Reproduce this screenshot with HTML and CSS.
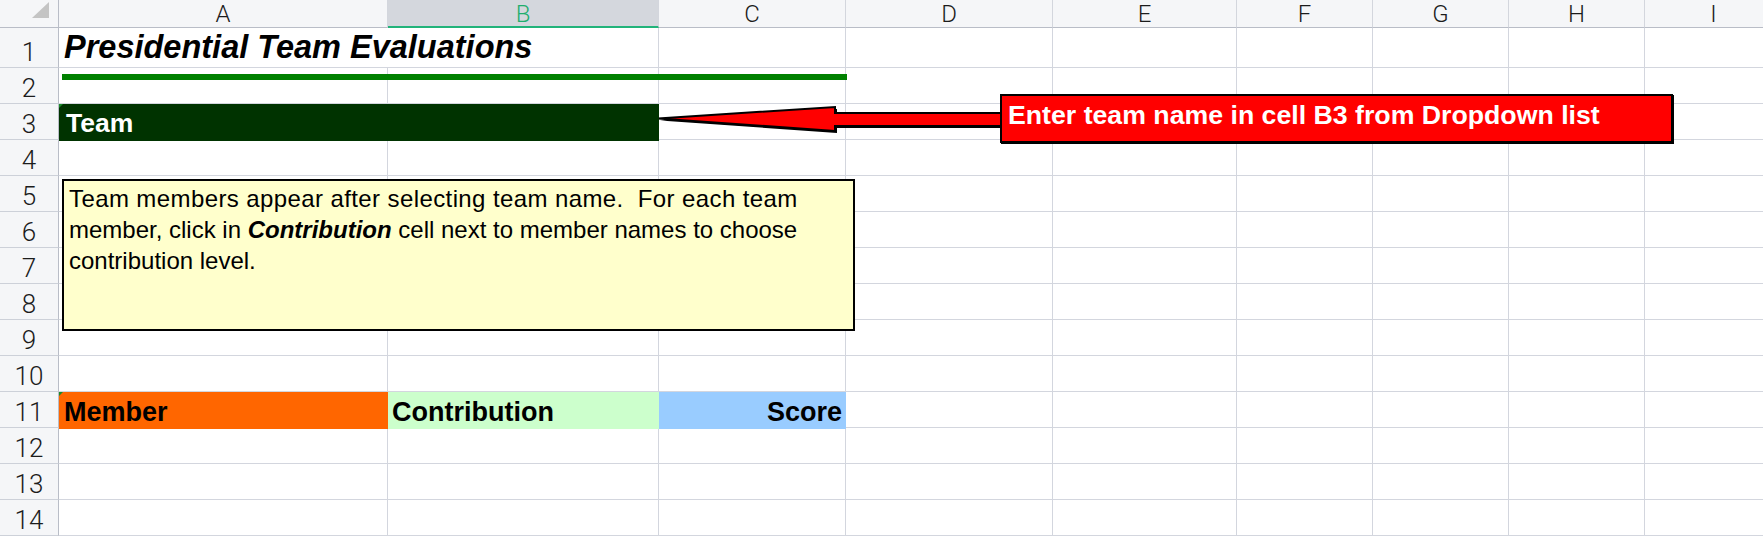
FILE: index.html
```html
<!DOCTYPE html>
<html>
<head>
<meta charset="utf-8">
<link rel="stylesheet" href="styles.css">
</head>
<body>
<div class="page">
  <div class="sheet">
    <div class="corner"><svg class="corner-tri" width="20" height="18" viewBox="0 0 20 18"><polygon points="18,1 18,17 1,17" fill="#c4c4c4"/></svg></div>
    <div class="colhead">A</div>
    <div class="colhead sel">B</div>
    <div class="colhead">C</div>
    <div class="colhead">D</div>
    <div class="colhead">E</div>
    <div class="colhead">F</div>
    <div class="colhead">G</div>
    <div class="colhead">H</div>
    <div class="colhead">I</div>

    <div class="rowhead">1</div>
    <div class="c span2 title">Presidential Team Evaluations</div>
    <div class="c"></div><div class="c"></div><div class="c"></div><div class="c"></div><div class="c"></div><div class="c"></div><div class="c"></div>

    <div class="rowhead">2</div>
    <div class="c"></div><div class="c"></div><div class="c"></div><div class="c"></div><div class="c"></div><div class="c"></div><div class="c"></div><div class="c"></div><div class="c"></div>

    <div class="rowhead">3</div>
    <div class="c span2 team flag">Team</div>
    <div class="c"></div><div class="c"></div><div class="c"></div><div class="c"></div><div class="c"></div><div class="c"></div><div class="c"></div>

    <div class="rowhead">4</div>
    <div class="c"></div><div class="c"></div><div class="c"></div><div class="c"></div><div class="c"></div><div class="c"></div><div class="c"></div><div class="c"></div><div class="c"></div>

    <div class="rowhead">5</div>
    <div class="c"></div><div class="c"></div><div class="c"></div><div class="c"></div><div class="c"></div><div class="c"></div><div class="c"></div><div class="c"></div><div class="c"></div>

    <div class="rowhead">6</div>
    <div class="c"></div><div class="c"></div><div class="c"></div><div class="c"></div><div class="c"></div><div class="c"></div><div class="c"></div><div class="c"></div><div class="c"></div>

    <div class="rowhead">7</div>
    <div class="c"></div><div class="c"></div><div class="c"></div><div class="c"></div><div class="c"></div><div class="c"></div><div class="c"></div><div class="c"></div><div class="c"></div>

    <div class="rowhead">8</div>
    <div class="c"></div><div class="c"></div><div class="c"></div><div class="c"></div><div class="c"></div><div class="c"></div><div class="c"></div><div class="c"></div><div class="c"></div>

    <div class="rowhead">9</div>
    <div class="c"></div><div class="c"></div><div class="c"></div><div class="c"></div><div class="c"></div><div class="c"></div><div class="c"></div><div class="c"></div><div class="c"></div>

    <div class="rowhead">10</div>
    <div class="c"></div><div class="c"></div><div class="c"></div><div class="c"></div><div class="c"></div><div class="c"></div><div class="c"></div><div class="c"></div><div class="c"></div>

    <div class="rowhead">11</div>
    <div class="c hdr member flag">Member</div>
    <div class="c hdr contrib">Contribution</div>
    <div class="c hdr score">Score</div>
    <div class="c"></div><div class="c"></div><div class="c"></div><div class="c"></div><div class="c"></div><div class="c"></div>

    <div class="rowhead">12</div>
    <div class="c"></div><div class="c"></div><div class="c"></div><div class="c"></div><div class="c"></div><div class="c"></div><div class="c"></div><div class="c"></div><div class="c"></div>

    <div class="rowhead">13</div>
    <div class="c"></div><div class="c"></div><div class="c"></div><div class="c"></div><div class="c"></div><div class="c"></div><div class="c"></div><div class="c"></div><div class="c"></div>

    <div class="rowhead">14</div>
    <div class="c"></div><div class="c"></div><div class="c"></div><div class="c"></div><div class="c"></div><div class="c"></div><div class="c"></div><div class="c"></div><div class="c"></div>
  </div>

  <div class="green-rule"></div>

  <div class="note"><span class="wide">Team members appear after selecting team name.&nbsp; For each team</span><br>member, click in <b><i>Contribution</i></b> cell next to member names to choose<br>contribution level.</div>

  <svg class="arrow" width="360" height="40" viewBox="0 0 360 40">
    <polygon points="9,19.5 186,8 186,14 352,14 352,27 186,27 186,32" fill="#000" transform="translate(1,1)"/>
    <polygon points="8,18.5 185,7 185,13 352,13 352,26 185,26 185,31" fill="#ff0000" stroke="#000" stroke-width="2" stroke-linejoin="miter"/>
  </svg>

  <div class="callout">Enter team name in cell B3 from Dropdown list</div>
</div>
</body>
</html>
```

FILE: styles.css
```css
html, body {
  margin: 0;
  padding: 0;
  background: #ffffff;
}

.page {
  position: relative;
  width: 1763px;
  height: 537px;
  overflow: hidden;
  font-family: "Liberation Sans", Arial, sans-serif;
}

.sheet {
  display: grid;
  width: 1783px;
  grid-template-columns: 59px 329px 271px 187px 207px 184px 136px 136px 136px 138px;
  grid-template-rows: 28px 40px repeat(13, 36px) 36px;
}

.corner {
  background: #f5f6f8;
  border-right: 1px solid #b9bdc7;
  border-bottom: 1px solid #b9bdc7;
  display: flex;
  justify-content: flex-end;
  align-items: flex-start;
  padding-right: 7px;
  padding-top: 1px;
}

.corner-tri {
  display: block;
}

.colhead {
  background: #f5f6f8;
  border-right: 1px solid #d3d6dd;
  border-bottom: 1px solid #b9bdc7;
  display: flex;
  justify-content: center;
  align-items: flex-start;
  font-family: "Roboto", "Liberation Sans", sans-serif;
  font-weight: 300;
  font-size: 24px;
  line-height: 24px;
  padding-top: 1.5px;
  box-sizing: border-box;
  color: #1c1c1c;
}

.colhead.sel {
  background: #d4d7dd;
  color: #1fae6e;
  border-bottom: 2px solid #21b37a;
}

.rowhead {
  background: #f5f6f8;
  border-right: 1px solid #b9bdc7;
  border-bottom: 1px solid #cdd1d9;
  display: flex;
  justify-content: center;
  align-items: flex-end;
  font-family: "Roboto", "Liberation Sans", sans-serif;
  font-weight: 300;
  font-size: 26px;
  line-height: 30px;
  color: #1c1c1c;
  padding-bottom: 0;
  box-sizing: border-box;
}

.c {
  border-right: 1px solid #d3d6de;
  border-bottom: 1px solid #d3d6de;
  display: flex;
  align-items: flex-end;
  white-space: nowrap;
  position: relative;
}

.span2 {
  grid-column: span 2;
}

.title {
  font-size: 32.5px;
  font-weight: bold;
  font-style: italic;
  color: #000;
  padding-left: 5px;
  padding-bottom: 1px;
  overflow: visible;
}

.team {
  background: #003300;
  border-right: none;
  border-bottom: none;
  color: #fff;
  font-size: 26.5px;
  font-weight: bold;
  padding-left: 7px;
  padding-bottom: 2px;
  margin-bottom: -1px;
  z-index: 1;
}

.hdr {
  font-size: 27px;
  font-weight: bold;
  color: #000;
  padding-bottom: 1px;
  border-right: none;
  border-bottom: none;
  margin-bottom: -1px;
  z-index: 1;
}

.member {
  background: #ff6600;
  padding-left: 5px;
}

.contrib {
  background: #ccffcc;
  padding-left: 4px;
}

.score {
  background: #99ccff;
  justify-content: flex-end;
  padding-right: 4px;
}

.flag::before {
  content: "";
  position: absolute;
  left: 0;
  top: 0;
  border-top: 4px solid #1a8a2a;
  border-right: 4px solid transparent;
}

.green-rule {
  position: absolute;
  left: 62px;
  top: 74px;
  width: 785px;
  height: 6px;
  background: #008000;
}

.note {
  position: absolute;
  left: 62px;
  top: 179px;
  width: 793px;
  height: 152px;
  box-sizing: border-box;
  border: 2px solid #000;
  background: #ffffcc;
  font-size: 24px;
  line-height: 31px;
  color: #000;
  padding: 2px 0 0 5px;
  white-space: nowrap;
}

.wide {
  letter-spacing: 0.4px;
}

.arrow {
  position: absolute;
  left: 650px;
  top: 100px;
  display: block;
}

.callout {
  position: absolute;
  left: 1000px;
  top: 94px;
  width: 673px;
  height: 49px;
  box-sizing: border-box;
  border: 2px solid #000;
  box-shadow: 1px 1px 0 #000;
  background: #ff0000;
  color: #fff;
  font-size: 26.7px;
  font-weight: bold;
  line-height: 30px;
  padding: 4px 0 0 6px;
  white-space: nowrap;
}
```
